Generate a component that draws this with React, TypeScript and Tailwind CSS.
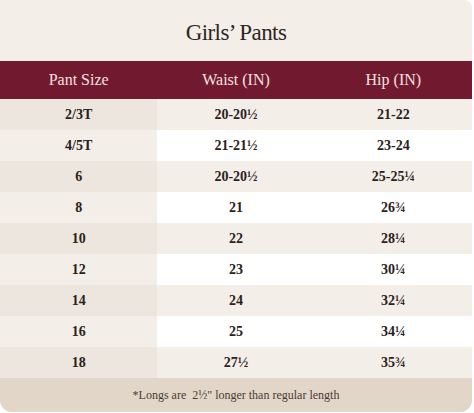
const rows: [string, string, string][] = [
  ["2/3T", "20-20½", "21-22"],
  ["4/5T", "21-21½", "23-24"],
  ["6", "20-20½", "25-25¼"],
  ["8", "21", "26¾"],
  ["10", "22", "28¼"],
  ["12", "23", "30¼"],
  ["14", "24", "32¼"],
  ["16", "25", "34¼"],
  ["18", "27½", "35¾"],
];

export default function App() {
  return (
    <div className="w-[474px] h-[413px] bg-white font-['Liberation_Serif',serif]">
      <div className="w-[472px] h-[412px] flex flex-col overflow-hidden rounded-tr-lg rounded-b-xl bg-[#f4eee9]">
        {/* Title */}
        <div className="h-[61px] flex items-center justify-center pt-[5px]">
          <h1 className="text-[23px] text-[#2e2624] tracking-tight">Girls’ Pants</h1>
        </div>

        {/* Header */}
        <div className="h-[38px] grid grid-cols-3 bg-[#711a2f] text-[16px] text-[#f6e0e0]">
          <div className="flex items-center justify-center">Pant Size</div>
          <div className="flex items-center justify-center">Waist (IN)</div>
          <div className="flex items-center justify-center">Hip (IN)</div>
        </div>

        {/* Rows */}
        {rows.map((r, i) => {
          const odd = i % 2 === 0;
          return (
            <div key={i} className="h-[31px] grid grid-cols-3 text-[14px] font-bold text-[#2a2220]">
              <div className={`flex items-center justify-center ${odd ? "bg-[#ede6de]" : "bg-[#f4eee8]"}`}>
                {r[0]}
              </div>
              <div className={`flex items-center justify-center ${odd ? "bg-[#f4eee8]" : "bg-white"}`}>
                {r[1]}
              </div>
              <div className={`flex items-center justify-center ${odd ? "bg-[#f4eee8]" : "bg-white"}`}>
                {r[2]}
              </div>
            </div>
          );
        })}

        {/* Footer note */}
        <div className="flex-1 flex items-center justify-center bg-[#e2d6c8] text-[12px] text-[#4a3c36]">
          *Longs are&nbsp; 2½" longer than regular length
        </div>
      </div>
    </div>
  );
}
